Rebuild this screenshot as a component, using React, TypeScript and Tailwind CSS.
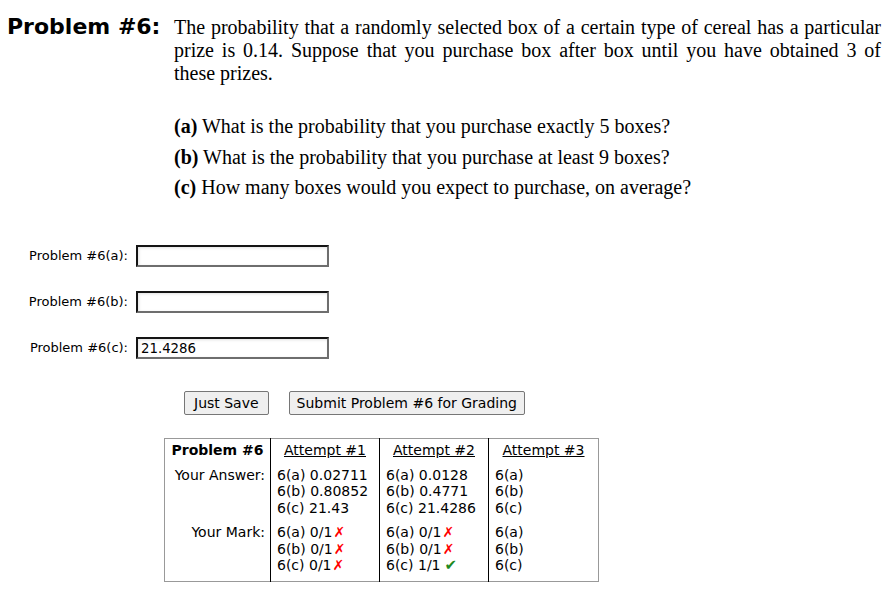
const serif = "font-['Liberation_Serif','Times_New_Roman',serif]";

function Cross() {
  return <span className="text-[#ff0000] ml-[1px] text-[14px] leading-[14px] font-bold">✗</span>;
}

function Tick() {
  return <span className="text-[#1f8a1f] ml-[4px] text-[15px] leading-[14px]">✔</span>;
}

function AnswerField({ label, value }: { label: string; value?: string }) {
  return (
    <div className="flex items-center h-[22px]">
      <label className="w-[121px] shrink-0 text-right text-[13px]">{label}</label>
      <input
        type="text"
        defaultValue={value}
        className="ml-[8px] w-[193px] h-[22px] border-2 border-t-[#141414] border-l-[#141414] border-r-[#6e6e6e] border-b-[#6e6e6e] bg-white px-[3px] text-[13.3px] text-black outline-none shadow-[inset_1px_1px_3px_rgba(0,0,0,0.12)]"
      />
    </div>
  );
}

export default function App() {
  const cell = "border-l border-black px-[6px] align-top";
  return (
    <div className="w-[895px] h-[590px] bg-white text-black font-['DejaVu_Sans','Verdana',sans-serif] pl-[7px] pr-[14px] pt-[10px]">
      {/* Heading + statement */}
      <div className="flex items-baseline">
        <h1 className="w-[167px] shrink-0 text-[22px] font-bold">Problem #6:</h1>
        <p className={`${serif} flex-1 text-[20px] leading-[23px] text-justify`}>
          The probability that a randomly selected box of a certain type of cereal has a particular prize is 0.14.
          Suppose that you purchase box after box until you have obtained 3 of these prizes.
        </p>
      </div>

      {/* Parts */}
      <div className={`${serif} ml-[167px] mt-[30px] flex flex-col gap-[7.5px] text-[20px] leading-[23px]`}>
        <div>
          <b>(a)</b> What is the probability that you purchase exactly 5 boxes?
        </div>
        <div>
          <b>(b)</b> What is the probability that you purchase at least 9 boxes?
        </div>
        <div>
          <b>(c)</b> How many boxes would you expect to purchase, on average?
        </div>
      </div>

      {/* Answer inputs */}
      <div className="mt-[46px] flex flex-col gap-[24px]">
        <AnswerField label="Problem #6(a):" />
        <AnswerField label="Problem #6(b):" />
        <AnswerField label="Problem #6(c):" value="21.4286" />
      </div>

      {/* Buttons */}
      <div className="mt-[32px] ml-[177px] flex gap-[20px] text-[14px]">
        <button className="h-[24px] px-[9px] rounded-[2px] border border-[#767676] bg-[#efefef]">Just Save</button>
        <button className="h-[24px] px-[7px] rounded-[2px] border border-[#767676] bg-[#efefef]">
          Submit Problem #6 for Grading
        </button>
      </div>

      {/* Attempts table */}
      <table className="mt-[23px] ml-[157px] border border-[#999999] border-collapse text-[14px] leading-[16.5px]">
        <colgroup>
          <col className="w-[106px]" />
          <col className="w-[109px]" />
          <col className="w-[109px]" />
          <col className="w-[110px]" />
        </colgroup>
        <thead>
          <tr>
            <th className="px-[6px] pt-[3px] pb-[3px] text-center font-bold">Problem #6</th>
            <th className={`${cell} pt-[3px] pb-[3px] text-center font-normal`}>
              <span className="underline">Attempt #1</span>
            </th>
            <th className={`${cell} pt-[3px] pb-[3px] text-center font-normal`}>
              <span className="underline">Attempt #2</span>
            </th>
            <th className={`${cell} pt-[3px] pb-[3px] text-center font-normal`}>
              <span className="underline">Attempt #3</span>
            </th>
          </tr>
        </thead>
        <tbody>
          <tr>
            <td className="pl-[6px] pr-[5px] pt-[5px] pb-[4px] text-right align-top">Your Answer:</td>
            <td className={`${cell} pt-[5px] pb-[4px]`}>
              <div>6(a) 0.02711</div>
              <div>6(b) 0.80852</div>
              <div>6(c) 21.43</div>
            </td>
            <td className={`${cell} pt-[5px] pb-[4px]`}>
              <div>6(a) 0.0128</div>
              <div>6(b) 0.4771</div>
              <div>6(c) 21.4286</div>
            </td>
            <td className={`${cell} pt-[5px] pb-[4px]`}>
              <div>6(a)</div>
              <div>6(b)</div>
              <div>6(c)</div>
            </td>
          </tr>
          <tr>
            <td className="pl-[6px] pr-[5px] pt-[4px] pb-[7px] text-right align-top">Your Mark:</td>
            <td className={`${cell} pt-[4px] pb-[7px]`}>
              <div>6(a) 0/1<Cross /></div>
              <div>6(b) 0/1<Cross /></div>
              <div>6(c) 0/1<Cross /></div>
            </td>
            <td className={`${cell} pt-[4px] pb-[7px]`}>
              <div>6(a) 0/1<Cross /></div>
              <div>6(b) 0/1<Cross /></div>
              <div>6(c) 1/1<Tick /></div>
            </td>
            <td className={`${cell} pt-[4px] pb-[7px]`}>
              <div>6(a)</div>
              <div>6(b)</div>
              <div>6(c)</div>
            </td>
          </tr>
        </tbody>
      </table>
    </div>
  );
}
